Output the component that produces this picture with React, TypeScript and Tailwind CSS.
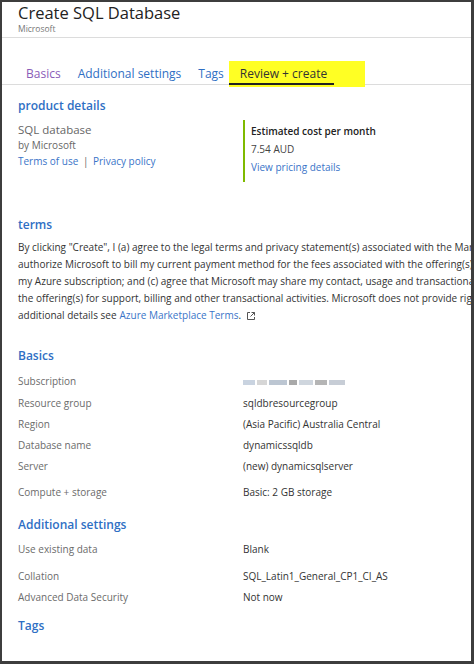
import React from "react";

const Row = ({ label, value, className = "" }: { label: string; value: React.ReactNode; className?: string }) => (
  <div className={`flex ${className}`}>
    <div className="w-[225px] text-[#6b6b6b]">{label}</div>
    <div className="text-[#333]">{value}</div>
  </div>
);

export default function App() {
  return (
    <div
      className="w-[474px] h-[664px] bg-white border-l-2 border-t-2 border-r-[3px] border-b-[3px] border-[#3d3d3d] overflow-hidden"
      style={{ fontFamily: '"Open Sans", "Noto Sans", sans-serif' }}
    >
      <div className="pl-4 h-[36px] border-b border-[#dcdcdc]">
        <div className="text-[16.5px] leading-[22px] text-[#222]">Create SQL Database</div>
        <div className="text-[8.5px] leading-[10px] text-[#777]">Microsoft</div>
      </div>
      <div className="mt-[23px] h-[24px] border-b border-[#dcdcdc] flex items-stretch text-[12px] text-[#2f6fc4]">
        <div className="pl-[24px] pt-[4px] text-[#8a5cb8]">Basics</div>
        <div className="pl-[17px] pt-[4px]">Additional settings</div>
        <div className="pl-[17px] pt-[4px]">Tags</div>
        <div className="ml-[5px] h-[26px] w-[136px] shrink-0 bg-[#ffff24] relative">
          <div className="pl-[11px] pt-[4px] text-[#333]">Review + create</div>
          <div className="absolute left-0 top-[22px] w-[105px] h-[2px] bg-[#222]" />
        </div>
      </div>

      <div className="pl-4 pt-[12px]">
        <div className="text-[12px] font-semibold text-[#2f6fc4] leading-[18px]">product details</div>
        <div className="flex mt-[6px]">
          <div className="w-[225px]">
            <div className="text-[11.5px] leading-[17px] text-[#666]">SQL database</div>
            <div className="text-[10px] leading-[15px] text-[#666]">by Microsoft</div>
            <div className="text-[10px] leading-[16px] text-[#3a74c8]">
              Terms of use <span className="text-[#666] px-[2px]">|</span> Privacy policy
            </div>
          </div>
          <div className="border-l-2 border-[#7fba00] pl-[6px] h-[62px] -mt-[1px] pt-[3px]">
            <div className="text-[10px] font-semibold leading-[16px] text-[#222]">Estimated cost per month</div>
            <div className="text-[10px] leading-[18px] text-[#444] mt-[1px]">7.54 AUD</div>
            <div className="text-[10px] leading-[18px] text-[#3a74c8]">View pricing details</div>
          </div>
        </div>

        <div className="mt-[34px] text-[12px] font-semibold text-[#2f6fc4] leading-[18px]">terms</div>
        <div className="mt-[5px] text-[10px] leading-[17px] text-[#333] whitespace-nowrap">
          <div>By clicking "Create", I (a) agree to the legal terms and privacy statement(s) associated with the Marketplace offering(s) listed above; (b)</div>
          <div>authorize Microsoft to bill my current payment method for the fees associated with the offering(s), with the same billing frequency as</div>
          <div>my Azure subscription; and (c) agree that Microsoft may share my contact, usage and transactional information with the provider(s) of</div>
          <div>the offering(s) for support, billing and other transactional activities. Microsoft does not provide rights for third-party offerings. For</div>
          <div className="flex items-center">
            additional details see <span className="text-[#3a74c8] ml-[3px]">Azure Marketplace Terms</span>.
            <svg className="ml-[5px]" width="10" height="10" viewBox="0 0 10 10" fill="none" stroke="#555" strokeWidth="1">
              <path d="M4 1.5H1.5v7h7V6" />
              <path d="M5.5 1.5h3v3M8.5 1.5L4.5 5.5" />
            </svg>
          </div>
        </div>

        <div className="mt-[23px] text-[12px] font-semibold text-[#2f6fc4] leading-[18px]">Basics</div>
        <div className="mt-[6px] text-[10px] leading-[21px]">
          <Row
            label="Subscription"
            value={
              <span className="inline-flex items-center gap-[2px] h-[21px] blur-[0.6px]">
                <span className="w-[12px] h-[5px] bg-[#c9d3e0]" />
                <span className="w-[10px] h-[5px] bg-[#d6d6d6]" />
                <span className="w-[18px] h-[5px] bg-[#bcc6d2]" />
                <span className="w-[8px] h-[5px] bg-[#a9a9a9]" />
                <span className="w-[14px] h-[5px] bg-[#cfd6de]" />
                <span className="w-[12px] h-[5px] bg-[#b5b5b5]" />
                <span className="w-[16px] h-[5px] bg-[#c7cdd6]" />
              </span>
            }
          />
          <Row label="Resource group" value="sqldbresourcegroup" />
          <Row label="Region" value="(Asia Pacific) Australia Central" />
          <Row label="Database name" value="dynamicssqldb" />
          <Row label="Server" value="(new) dynamicsqlserver" />
          <Row label="Compute + storage" value="Basic: 2 GB storage" className="mt-[5px]" />
        </div>

        <div className="mt-[13px] text-[12px] font-semibold text-[#2f6fc4] leading-[18px]">Additional settings</div>
        <div className="mt-[5px] text-[10px] leading-[21px]">
          <Row label="Use existing data" value="Blank" />
          <Row label="Collation" value="SQL_Latin1_General_CP1_CI_AS" className="mt-[6px]" />
          <Row label="Advanced Data Security" value="Not now" />
        </div>
        <div className="mt-[9px] text-[12px] font-semibold text-[#2f6fc4] leading-[18px]">Tags</div>
      </div>
    </div>
  );
}
